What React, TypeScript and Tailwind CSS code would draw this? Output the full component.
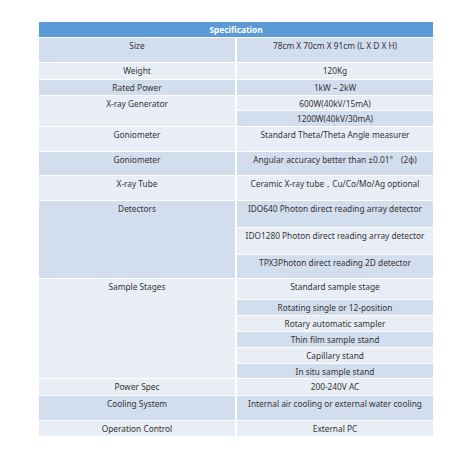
import React from "react";

const D = "bg-[#d2ddee]";
const L = "bg-[#e9edf6]";

type Cell = { text: string; cls: string };

const left: Cell[] = [
  { text: "Size", cls: `row-start-2 row-span-1 ${D}` },
  { text: "Weight", cls: `row-start-3 row-span-1 ${L}` },
  { text: "Rated Power", cls: `row-start-4 row-span-1 ${D}` },
  { text: "X-ray Generator", cls: `row-start-5 row-span-2 ${L}` },
  { text: "Goniometer", cls: `row-start-7 row-span-1 ${L}` },
  { text: "Goniometer", cls: `row-start-8 row-span-1 ${D}` },
  { text: "X-ray Tube", cls: `row-start-9 row-span-1 ${L}` },
  { text: "Detectors", cls: `row-start-10 row-span-3 ${D}` },
  { text: "Sample Stages", cls: `row-start-13 row-span-6 ${L}` },
  { text: "Power Spec", cls: `row-start-19 row-span-1 ${L}` },
  { text: "Cooling System", cls: `row-start-20 row-span-1 ${D}` },
  { text: "Operation Control", cls: `row-start-21 row-span-1 ${L}` },
];

const right: Cell[] = [
  { text: "78cm X 70cm X 91cm (L X D X H)", cls: `row-start-2 ${D}` },
  { text: "120Kg", cls: `row-start-3 ${L}` },
  { text: "1kW – 2kW", cls: `row-start-4 ${D}` },
  { text: "600W(40kV/15mA)", cls: `row-start-5 ${L}` },
  { text: "1200W(40kV/30mA)", cls: `row-start-6 ${D}` },
  { text: "Standard Theta/Theta Angle measurer", cls: `row-start-7 ${L}` },
  { text: "Angular accuracy better than \u00B10.01\u00B0\u3000(2\u03D5)", cls: `row-start-8 ${D}` },
  { text: "Ceramic X-ray tube\uFF0CCu/Co/Mo/Ag optional", cls: `row-start-9 ${L}` },
  { text: "IDO640 Photon direct reading array detector", cls: `row-start-10 ${D}` },
  { text: "IDO1280 Photon direct reading array detector", cls: `row-start-11 ${L}` },
  { text: "TPX3Photon direct reading 2D detector", cls: `row-start-12 ${D}` },
  { text: "Standard sample stage", cls: `row-start-13 ${L}` },
  { text: "Rotating single or 12-position", cls: `row-start-14 ${D}` },
  { text: "Rotary automatic sampler", cls: `row-start-15 ${L}` },
  { text: "Thin film sample stand", cls: `row-start-16 ${D}` },
  { text: "Capillary stand", cls: `row-start-17 ${L}` },
  { text: "In situ sample stand", cls: `row-start-18 ${D}` },
  { text: "200-240V AC", cls: `row-start-19 ${L}` },
  { text: "Internal air cooling or external water cooling", cls: `row-start-20 ${D}` },
  { text: "External PC", cls: `row-start-21 ${L}` },
];

export default function App() {
  return (
    <div className="w-[474px] h-[474px] bg-white pt-[22px] pl-[39px]">
      <div className="grid grid-cols-[196px_196px] gap-x-[2px] gap-y-[1px] grid-rows-[15px_24px_16px_15px_14px_15px_24px_23px_24px_26px_26px_23px_20px_15px_15px_15px_15px_14px_16px_24px_15px] text-[8.3px] text-[#353535] text-center font-['Noto_Sans','Open_Sans',sans-serif]">
        <div className="col-span-2 row-start-1 bg-[#5b9bd5] text-white font-bold flex items-center justify-center leading-[14px]">
          Specification
        </div>
        {left.map((c, i) => (
          <div
            key={"l" + i}
            className={`col-start-1 ${c.cls} flex justify-center pt-[1px] leading-[14px]`}
          >
            {c.text}
          </div>
        ))}
        {right.map((c, i) => (
          <div
            key={"r" + i}
            className={`col-start-2 ${c.cls} flex justify-center pt-[1px] leading-[14px] whitespace-nowrap`}
          >
            {c.text}
          </div>
        ))}
      </div>
    </div>
  );
}
